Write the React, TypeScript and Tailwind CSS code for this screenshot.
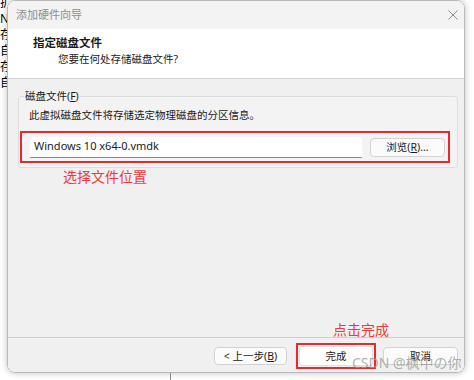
const font = "font-['Noto_Sans','Noto_Sans_CJK_SC',sans-serif]";

const App: React.FC = () => {
  return (
    <div className={`${font} relative flex h-[380px] w-[474px] overflow-hidden bg-white text-[#1a1a1a]`}>
      {/* text of the window behind, cut off by the dialog */}
      <div className="-mt-[5px] w-[7px] shrink-0 overflow-hidden whitespace-nowrap text-[12px] leading-[16px] text-black">
        <div>扩展</div>
        <div>N</div>
        <div>存储</div>
        <div>自动</div>
        <div>存储</div>
        <div>自动</div>
      </div>

      <div className="flex shrink-0 flex-col">
        {/* Dialog */}
        <div className="flex h-[373px] w-[458px] flex-col overflow-hidden rounded-[8px] border border-[#b9b9b9] shadow-[0_0_6px_rgba(0,0,0,0.25)]">
          {/* Title bar */}
          <div className="flex h-[28px] shrink-0 items-center justify-between bg-[#f3f3f3] pl-[8px] pr-[6px]">
            <span className="text-[11px] text-[#8d8d8d]">添加硬件向导</span>
            <svg width="10" height="10" viewBox="0 0 10 10">
              <path d="M0.5 0.5L9.5 9.5M9.5 0.5L0.5 9.5" stroke="#8a8a8a" strokeWidth="1" />
            </svg>
          </div>

          {/* Header */}
          <div className="h-[50px] shrink-0 border-b border-[#d6d6d6] bg-white pt-[6px]">
            <div className="pl-[25px] text-[11.5px] font-bold leading-[16px]">指定磁盘文件</div>
            <div className="pl-[50px] text-[10.5px] leading-[17px]">您要在何处存储磁盘文件?</div>
          </div>

          {/* Body */}
          <div className="flex h-[258px] shrink-0 flex-col bg-[#f0f0f0] pt-[9px]">
            <fieldset className="ml-[10px] h-[80px] w-[440px] rounded-[3px] border border-[#dcdcdc] bg-[#f3f3f3] p-0">
              <legend className="ml-[5px] px-[1px] text-[10.5px] leading-[16px]">
                磁盘文件(<span className="underline">F</span>)
              </legend>
              <div className="mt-[3px] pl-[10px] text-[10.5px] leading-[16px]">此虚拟磁盘文件将存储选定物理磁盘的分区信息。</div>
              <div className="ml-[1px] mt-[8px] flex h-[32px] w-[430px] items-center border-2 border-[#e8292b] pl-[8px] pr-[3px]">
                <div className="flex h-[21px] w-[332px] items-center rounded-t-[3px] border-b border-[#8a8a8a] bg-white pl-[4px] text-[11px] text-[#222]">
                  Windows 10 x64-0.vmdk
                </div>
                <button className="ml-[8px] h-[19px] w-[75px] rounded-[4px] border border-[#d2d2d2] bg-[#fbfbfb] text-[10.5px] leading-none">
                  浏览(<span className="underline">R</span>)...
                </button>
              </div>
            </fieldset>

            <div className="ml-[55px] text-[14px] leading-[18px] text-[#ee3a3a]">选择文件位置</div>

            <div className="mt-auto ml-[325px] text-[14px] leading-[15px] text-[#ee3a3a]">点击完成</div>
          </div>

          {/* Footer */}
          <div className="flex h-[37px] shrink-0 items-center justify-end border-t border-[#cfcfcf] bg-[#f0f0f0] pr-[6px]">
            <button className="h-[18px] w-[73px] rounded-[4px] border border-[#d2d2d2] bg-[#fbfbfb] text-[10.5px] leading-none">
              &lt; 上一步(<span className="underline">B</span>)
            </button>
            <div className="ml-[9px] flex h-[26px] w-[80px] items-center justify-center border-2 border-[#e8292b]">
              <button className="h-[20px] w-[74px] rounded-[3px] border border-[#e0e0e0] bg-white text-[10.5px] leading-none">
                完成
              </button>
            </div>
            <button className="ml-[7px] h-[18px] w-[75px] rounded-[4px] border border-[#d2d2d2] bg-[#fbfbfb] text-[10.5px] leading-none">
              取消
            </button>
          </div>
        </div>
        {/* edge of something behind the dialog */}
        <div className="ml-[163px] h-[7px] w-px bg-[#8a8a8a]" />
      </div>

      {/* watermark */}
      <div className="absolute left-[352px] top-[353px] whitespace-nowrap text-[14px] leading-[20px] text-[#9b9b9b]/80">
        CSDN @枫中の你
      </div>
    </div>
  );
};

export default App;
